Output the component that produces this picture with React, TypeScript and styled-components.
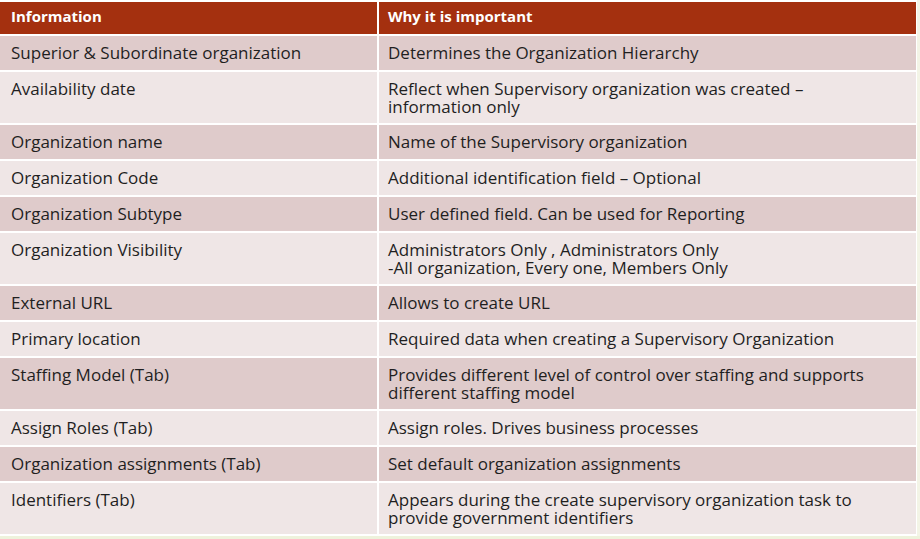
import React from "react";
import styled, { createGlobalStyle } from "styled-components";

const GlobalStyle = createGlobalStyle`
  html, body {
    margin: 0;
    padding: 0;
    background: #f3f4e6;
  }
`;

const rows: [string, string[]][] = [
  ["Superior & Subordinate organization", ["Determines the Organization Hierarchy"]],
  ["Availability date", ["Reflect when Supervisory organization was created –", "information only"]],
  ["Organization name", ["Name of the Supervisory organization"]],
  ["Organization Code", ["Additional identification field – Optional"]],
  ["Organization Subtype", ["User defined field. Can be used for Reporting"]],
  ["Organization Visibility", ["Administrators Only , Administrators Only", "-All organization, Every one, Members Only"]],
  ["External URL", ["Allows to create URL"]],
  ["Primary location", ["Required data when creating a Supervisory Organization"]],
  ["Staffing Model (Tab)", ["Provides different level of control over staffing and supports", "different staffing model"]],
  ["Assign Roles (Tab)", ["Assign roles. Drives business processes"]],
  ["Organization assignments (Tab)", ["Set default organization assignments"]],
  ["Identifiers (Tab)", ["Appears during the create supervisory organization task to", "provide government identifiers"]],
];

const Page = styled.div`
  width: 920px;
  height: 539px;
  overflow: hidden;
  display: flex;
  flex-direction: column;
`;

const Frame = styled.div`
  width: 917px;
  padding-top: 2px;
  background: #ffffff;
`;

const Table = styled.table`
  width: 916px;
  border-collapse: collapse;
  table-layout: fixed;
  font-family: "Open Sans", "DejaVu Sans", sans-serif;
`;

const HeadCell = styled.th<{ $w: number }>`
  width: ${(p) => p.$w}px;
  background: #a4300f;
  color: #ffffff;
  font-weight: 700;
  font-size: 15px;
  text-align: left;
  height: 33px;
  padding: 0 0 4px 11px;
  box-sizing: border-box;
  border-right: 2px solid #ffffff;
  border-bottom: 2px solid #ffffff;
  &:last-child {
    border-right: none;
    padding-left: 9px;
  }
`;

const Cell = styled.td<{ $dark: boolean; $tall: boolean }>`
  background: ${(p) => (p.$dark ? "#dfcbcb" : "#efe6e6")};
  color: #1f1f1f;
  font-size: 17px;
  line-height: 18px;
  vertical-align: top;
  white-space: nowrap;
  height: ${(p) => (p.$tall ? 53 : 36)}px;
  padding: 8px 0 0 11px;
  box-sizing: border-box;
  border-right: 2px solid #ffffff;
  border-bottom: 2px solid #ffffff;
  &:last-child {
    border-right: none;
    padding-left: 9px;
  }
`;

const Footer = styled.div`
  flex: 1;
  background: #eef2dc;
`;

export default function App() {
  return (
    <>
      <GlobalStyle />
      <Page>
        <Frame>
          <Table>
            <thead>
              <tr>
                <HeadCell $w={378}>Information</HeadCell>
                <HeadCell $w={538}>Why it is important</HeadCell>
              </tr>
            </thead>
            <tbody>
              {rows.map(([info, why], i) => (
                <tr key={info}>
                  <Cell $dark={i % 2 === 0} $tall={why.length > 1}>
                    {info}
                  </Cell>
                  <Cell $dark={i % 2 === 0} $tall={why.length > 1}>
                    {why[0]}
                    {why[1] && (
                      <>
                        <br />
                        {why[1]}
                      </>
                    )}
                  </Cell>
                </tr>
              ))}
            </tbody>
          </Table>
        </Frame>
        <Footer />
      </Page>
    </>
  );
}
